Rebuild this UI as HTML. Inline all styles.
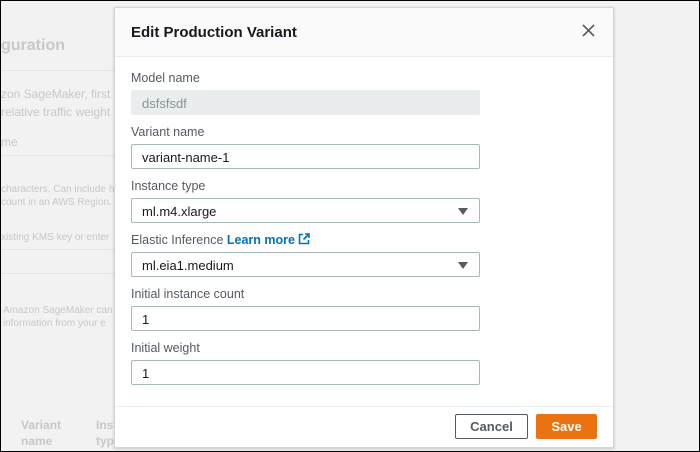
<!DOCTYPE html>
<html><head><style>
*{box-sizing:border-box;margin:0;padding:0}
body{width:700px;height:452px;overflow:hidden;background:#f2f2f2;font-family:"Liberation Sans",Arial,sans-serif;position:relative;border:1px solid #000}
.bg{position:absolute;color:#c8c8c8;font-size:12px;white-space:nowrap}
.line{position:absolute;height:1px;background:#e4e4e4;left:0;width:113px}
.modal{position:absolute;left:113px;top:6px;width:500px;height:441px;background:#fff;border:1px solid #d5d5d5;box-shadow:0 1px 3px rgba(0,0,0,.2)}
.hd{height:49px;background:#fafafa;border-bottom:1px solid #eaeded;padding:16px 16px;font-weight:bold;font-size:15px;color:#16191f}
.x{position:absolute;right:18px;top:16px}
.lbl{position:absolute;left:16px;font-size:12.5px;color:#545b64}
.in{position:absolute;left:16px;width:349px;height:25px;border:1px solid #aab7b8;border-radius:2px;font-size:13px;color:#16191f;padding:5px 10px}
.dis{background:#eaeded;border-color:#eaeded;color:#879596}
.ar{position:absolute;right:11px;top:9px;width:0;height:0;border-left:5px solid transparent;border-right:5px solid transparent;border-top:7px solid #545b64}
.ft{position:absolute;left:0;right:0;top:398px;border-top:1px solid #eaeded}
.btn{position:absolute;top:406px;height:25px;font-size:13px;font-weight:bold;text-align:center;line-height:23px;border-radius:2px}
</style></head><body>
<div class="bg" style="left:0;top:36px;font-size:16px;font-weight:bold">guration</div>
<div class="line" style="top:69px"></div>
<div class="bg" style="left:0;top:86px">zon SageMaker, first c</div>
<div class="bg" style="left:0;top:104px">relative traffic weight</div>
<div class="bg" style="left:0;top:134px">me</div>
<div class="line" style="top:154px"></div>
<div class="bg" style="left:0;top:183px;font-size:10px">characters. Can include h</div>
<div class="bg" style="left:0;top:196px;font-size:10px">count in an AWS Region.</div>
<div class="bg" style="left:0;top:231px;font-size:10px">xisting KMS key or enter</div>
<div class="line" style="top:248px"></div>
<div class="line" style="top:272px"></div>
<div class="bg" style="left:2px;top:304px;font-size:10px">Amazon SageMaker can</div>
<div class="bg" style="left:2px;top:317px;font-size:10px">information from your e</div>
<div class="bg" style="left:20px;top:417px;font-weight:bold">Variant</div>
<div class="bg" style="left:20px;top:433px;font-weight:bold">name</div>
<div class="bg" style="left:95px;top:417px;font-weight:bold">Inst</div>
<div class="bg" style="left:95px;top:433px;font-weight:bold">typ</div>
<div class="modal">
<div class="hd">Edit Production Variant</div>
<svg class="x" width="13" height="13" viewBox="0 0 14 14"><path d="M1 1L13 13M13 1L1 13" stroke="#545b64" stroke-width="1.8"/></svg>
<div class="lbl" style="top:63px">Model name</div>
<div class="in dis" style="top:82px">dsfsfsdf</div>
<div class="lbl" style="top:117px">Variant name</div>
<div class="in" style="top:136px">variant-name-1</div>
<div class="lbl" style="top:171px">Instance type</div>
<div class="in" style="top:190px">ml.m4.xlarge<div class="ar"></div></div>
<div class="lbl" style="top:225px">Elastic Inference <b style="color:#0073bb">Learn more</b> <svg width="12" height="12" viewBox="0 0 12 12" style="vertical-align:-1px"><path d="M5 1.5H1.5V10.5H10.5V7M7 1H11V5M11 1L5.5 6.5" stroke="#0073bb" stroke-width="1.6" fill="none"/></svg></div>
<div class="in" style="top:244px">ml.eia1.medium<div class="ar"></div></div>
<div class="lbl" style="top:279px">Initial instance count</div>
<div class="in" style="top:298px">1</div>
<div class="lbl" style="top:333px">Initial weight</div>
<div class="in" style="top:352px">1</div>
<div class="ft"></div>
<div class="btn" style="left:340px;width:73px;border:1px solid #545b64;color:#545b64;background:#fff">Cancel</div>
<div class="btn" style="left:421px;width:61px;background:#ec7211;color:#fff;border:1px solid #ec7211">Save</div>
</div>
</body></html>
